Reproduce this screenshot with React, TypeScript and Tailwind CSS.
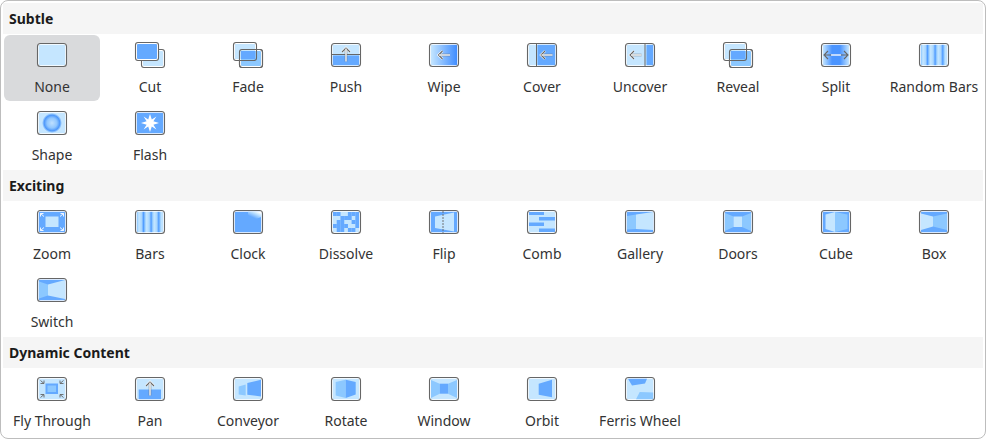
import React from 'react';

const LIGHT = '#c5e6ff';
const BLUE = '#64a9ff';
const MID = '#8cc8ff';
const EDGE = '#666666';

// 32x28 box, the single frame sits at x 1-31, y 2-26, its fill area at x 3-29, y 4-24
const Frame = ({ fill = LIGHT, children }: { fill?: string; children?: React.ReactNode }) => (
  <>
    <rect x="1.5" y="2.5" width="29" height="23" rx="3" fill="#fff" stroke={EDGE} strokeWidth="1.1" />
    <rect x="2.8" y="3.8" width="26.4" height="20.4" rx="1.2" fill={fill} />
    {children}
  </>
);

const Arrow = ({ shaft, head }: { shaft: string; head: string }) => (
  <>
    <path d={head} fill="none" stroke="#fff" strokeWidth="2.4" />
    <path d={shaft} fill="none" stroke={EDGE} strokeWidth="2.6" strokeOpacity="0.6" />
    <path d={head} fill="none" stroke={EDGE} strokeWidth="1.1" />
    <path d={shaft} fill="none" stroke="#fff" strokeWidth="1.3" />
  </>
);

const Stacked = ({ back, front, overlap }: { back: string; front: string; overlap?: string }) => (
  <>
    <rect x="7.5" y="8.5" width="23" height="18" rx="2.5" fill="#fff" stroke={EDGE} strokeWidth="1.1" />
    <rect x="9" y="10" width="20" height="15" rx="1" fill={back} />
    {overlap ? (
      <>
        <path d="M3 3h20v7H9v8H3z" fill={front} />
        <rect x="9" y="10" width="14" height="8" fill={overlap} />
        <rect x="1.5" y="1.5" width="23" height="18" rx="2.5" fill="none" stroke={EDGE} strokeWidth="1.1" />
        <rect x="7.5" y="8.5" width="23" height="18" rx="2.5" fill="none" stroke={EDGE} strokeWidth="1.1" />
      </>
    ) : (
      <>
        <rect x="1.5" y="1.5" width="23" height="18" rx="2.5" fill="#fff" stroke={EDGE} strokeWidth="1.1" />
        <rect x="3" y="3" width="20" height="15" rx="1" fill={front} />
      </>
    )}
  </>
);

const dissolveRows = ['BBLLBBB', 'LLBBBLB', 'LBBLLBB', 'BBBBLLB', 'LBBLBBL'];

const icons: Record<string, React.ReactNode> = {
  None: <Frame />,
  Cut: <Stacked back={LIGHT} front={BLUE} />,
  Fade: <Stacked back={MID} front={LIGHT} overlap={BLUE} />,
  Push: (
    <Frame>
      <rect x="2.8" y="14.5" width="26.4" height="9.7" fill={BLUE} />
      <path d="M2 13.5h28" stroke={EDGE} strokeWidth="1" />
      <Arrow shaft="M16 20.5V7.5" head="M12 11l4-4 4 4" />
    </Frame>
  ),
  Wipe: (
    <Frame fill="url(#wipe)">
      <Arrow shaft="M22 14H11" head="M14.5 10l-4 4 4 4" />
    </Frame>
  ),
  Cover: (
    <Frame>
      <rect x="11.5" y="3.8" width="17.7" height="20.4" fill={BLUE} />
      <path d="M10.5 3v22" stroke={EDGE} strokeWidth="1" />
      <Arrow shaft="M26.5 14H15.5" head="M19 10l-4 4 4 4" />
    </Frame>
  ),
  Uncover: (
    <Frame>
      <rect x="22.5" y="3.8" width="6.7" height="20.4" fill={BLUE} />
      <path d="M21 3v22" stroke={EDGE} strokeWidth="1" />
      <Arrow shaft="M17.5 14H7" head="M10 10l-4 4 4 4" />
    </Frame>
  ),
  Reveal: <Stacked back={MID} front={LIGHT} overlap={BLUE} />,
  Split: (
    <Frame fill="url(#split)">
      <path d="M8 10l-4 4 4 4M5 14h7" fill="none" stroke={EDGE} strokeWidth="1.1" />
      <path d="M24 10l4 4-4 4M27 14h-7" fill="none" stroke={EDGE} strokeWidth="1.1" />
      <path d="M11 14h10" stroke="#fff" strokeWidth="1.3" />
    </Frame>
  ),
  'Random Bars': <Frame fill="url(#stripe)" />,
  Shape: (
    <Frame>
      <circle cx="16" cy="14" r="10" fill="url(#ring)" />
    </Frame>
  ),
  Flash: (
    <Frame fill={BLUE}>
      <path d="M16 5l1.8 5.6 4.6-3-3 4.6L25 14l-5.6 1.8 3 4.6-4.6-3L16 23l-1.8-5.6-4.6 3 3-4.6L7 14l5.6-1.8-3-4.6 4.6 3z" fill="#fff" />
    </Frame>
  ),
  Zoom: (
    <Frame fill={BLUE}>
      <rect x="9.5" y="8.5" width="13" height="10.5" fill={LIGHT} />
      <path d="M4.5 8.5v-3h3M4.5 5.5l3.5 3M27.5 8.5v-3h-3M27.5 5.5l-3.5 3M4.5 19.5v3h3M4.5 22.5l3.5-3M27.5 19.5v3h-3M27.5 22.5l-3.5-3" fill="none" stroke="#fff" strokeWidth="0.9" />
    </Frame>
  ),
  Bars: <Frame fill="url(#stripe)" />,
  Clock: (
    <Frame fill={BLUE}>
      <path d="M16 3.8h13.2v5.2L16 14z" fill="url(#clock)" />
    </Frame>
  ),
  Dissolve: (
    <Frame>
      {dissolveRows.map((row, y) =>
        row.split('').map((c, x) =>
          c === 'B' ? <rect key={`${x}-${y}`} x={3 + x * 3.72} y={4 + y * 4} width="3.8" height="4" fill={BLUE} /> : null,
        ),
      )}
    </Frame>
  ),
  Flip: (
    <Frame fill={BLUE}>
      <path d="M7 8.5L26 4.5V23.5L7 20z" fill={LIGHT} />
      <path d="M15 3v22" stroke={EDGE} strokeWidth="0.9" strokeDasharray="2 1" />
    </Frame>
  ),
  Comb: (
    <Frame>
      <rect x="3" y="4" width="15" height="3" fill={BLUE} />
      <rect x="13" y="9" width="16" height="3.5" fill={BLUE} />
      <rect x="3" y="14.5" width="15" height="3.5" fill={BLUE} />
      <rect x="13" y="20.5" width="16" height="3.5" fill={BLUE} />
    </Frame>
  ),
  Gallery: (
    <Frame fill={BLUE}>
      <path d="M3 8l9-1.5V21l-9 .5z" fill={MID} />
      <path d="M12 6.5L29 4v18l-17-1z" fill={LIGHT} />
    </Frame>
  ),
  Doors: (
    <Frame fill={BLUE}>
      <path d="M3 5l8.5 3.5v10.5L3 23zM29 5l-9 3.5v10.5l9 4z" fill={MID} />
      <rect x="11.5" y="8.5" width="8.5" height="10.5" fill={LIGHT} />
    </Frame>
  ),
  Cube: (
    <Frame fill={BLUE}>
      <path d="M5.5 6.5L15 4v20l-9.5-3z" fill={LIGHT} />
      <path d="M15 4l12.5 2.5V21L15 24z" fill={MID} />
    </Frame>
  ),
  Box: (
    <Frame fill={BLUE}>
      <path d="M3 5.5l12 3v10l-12 3.5z" fill={LIGHT} />
      <path d="M29 5.5l-14 3v10l14 3.5z" fill={MID} />
    </Frame>
  ),
  Switch: (
    <Frame fill={BLUE}>
      <path d="M3 5.5l9 3v11l-9 3z" fill={MID} />
      <path d="M12 8.5L29 4v19l-17-3.5z" fill={LIGHT} />
    </Frame>
  ),
  'Fly Through': (
    <Frame>
      <rect x="9.5" y="8.5" width="12.5" height="10.5" fill={BLUE} />
      <rect x="11.5" y="10.5" width="8.5" height="6.5" fill={MID} />
      <path d="M4.5 5.5l3.5 3M8 5.5v3h-3.5M27.5 5.5l-3.5 3M24 5.5v3h3.5M4.5 22.5l3.5-3M8 22.5v-3h-3.5M27.5 22.5l-3.5-3M24 22.5v-3h3.5" fill="none" stroke={EDGE} strokeWidth="0.9" />
    </Frame>
  ),
  Pan: (
    <Frame>
      <rect x="4.7" y="14.5" width="22.3" height="9.7" fill={BLUE} />
      <Arrow shaft="M16 20.5V7.5" head="M12 11l4-4 4 4" />
    </Frame>
  ),
  Conveyor: (
    <Frame>
      <path d="M6.7 11.5l7-2v11l-7-1z" fill={MID} />
      <path d="M15.3 8L29 4.7V21.5L15.3 19.7z" fill={BLUE} />
    </Frame>
  ),
  Rotate: (
    <Frame>
      <path d="M5.7 7l10-2.3V23L5.7 20.5z" fill={MID} />
      <path d="M15.7 4.7l10 2.3v12.5L15.7 23z" fill={BLUE} />
    </Frame>
  ),
  Window: (
    <Frame>
      <path d="M3 5l8.7 3.7v10L3 23zM29 5l-9 3.7v10l9 4.3z" fill={MID} />
      <rect x="11.7" y="8.7" width="8.3" height="10" fill={BLUE} />
    </Frame>
  ),
  Orbit: (
    <Frame>
      <path d="M12.7 8.7L26 4.7v17.6L12.7 19.7z" fill={BLUE} />
    </Frame>
  ),
  'Ferris Wheel': (
    <Frame>
      <path d="M4 3.8h19l-2 4.7-13 2z" fill={BLUE} />
      <path d="M15.7 17l13.5.5v6.7H12z" fill={MID} />
    </Frame>
  ),
};

const Icon = ({ name }: { name: string }) => (
  <svg width="32" height="28" viewBox="0 0 32 28" className="block">
    {icons[name]}
  </svg>
);

const sections = [
  { title: 'Subtle', items: ['None', 'Cut', 'Fade', 'Push', 'Wipe', 'Cover', 'Uncover', 'Reveal', 'Split', 'Random Bars', 'Shape', 'Flash'] },
  { title: 'Exciting', items: ['Zoom', 'Bars', 'Clock', 'Dissolve', 'Flip', 'Comb', 'Gallery', 'Doors', 'Cube', 'Box', 'Switch'] },
  { title: 'Dynamic Content', items: ['Fly Through', 'Pan', 'Conveyor', 'Rotate', 'Window', 'Orbit', 'Ferris Wheel'] },
];

export default function App() {
  return (
    <div className="h-[439px] w-[986px] bg-white font-['Noto_Sans',sans-serif]">
      <svg width="0" height="0" className="absolute">
        <defs>
          <linearGradient id="wipe">
            <stop offset="0" stopColor={LIGHT} />
            <stop offset="1" stopColor="#3f8cff" />
          </linearGradient>
          <linearGradient id="split">
            <stop offset="0" stopColor={LIGHT} />
            <stop offset="0.35" stopColor="#4a94ff" />
            <stop offset="0.65" stopColor="#4a94ff" />
            <stop offset="1" stopColor={LIGHT} />
          </linearGradient>
          <linearGradient id="stripe" gradientUnits="userSpaceOnUse" x1="5" y1="0" x2="12.6" y2="0" spreadMethod="repeat">
            <stop offset="0" stopColor={LIGHT} />
            <stop offset="0.35" stopColor="#a8d6ff" />
            <stop offset="0.6" stopColor="#4f9bff" />
            <stop offset="0.8" stopColor="#9acfff" />
            <stop offset="1" stopColor={LIGHT} />
          </linearGradient>
          <linearGradient id="clock" x1="0.2" y1="1" x2="0.8" y2="0">
            <stop offset="0.4" stopColor={BLUE} />
            <stop offset="0.8" stopColor={LIGHT} />
            <stop offset="1" stopColor="#ffffff" />
          </linearGradient>
          <radialGradient id="ring">
            <stop offset="0" stopColor="#bfe0ff" />
            <stop offset="0.5" stopColor="#8fc6ff" />
            <stop offset="0.78" stopColor="#4e98fa" />
            <stop offset="1" stopColor={LIGHT} />
          </radialGradient>
        </defs>
      </svg>
      <div className="box-border h-full w-full rounded-lg border border-[#bdbdbd] p-[2px]">
        {sections.map((s) => (
          <section key={s.title}>
            <h2 className="flex h-[31px] items-center bg-[#f5f5f5] pl-[6px] text-[14px] font-bold text-[#1b1b1b]">{s.title}</h2>
            <div className="grid grid-cols-[repeat(10,98px)]">
              {s.items.map((name) => (
                <div key={name} className="h-[68px] p-[1px]">
                  <div className={`flex h-[66px] flex-col items-center rounded-md pt-[6px] ${name === 'None' ? 'bg-[#d9dadc]' : ''}`}>
                    <Icon name={name} />
                    <span className="mt-[8px] text-[14px] leading-[19px] whitespace-nowrap text-[#333333]">{name}</span>
                  </div>
                </div>
              ))}
            </div>
          </section>
        ))}
      </div>
    </div>
  );
}
